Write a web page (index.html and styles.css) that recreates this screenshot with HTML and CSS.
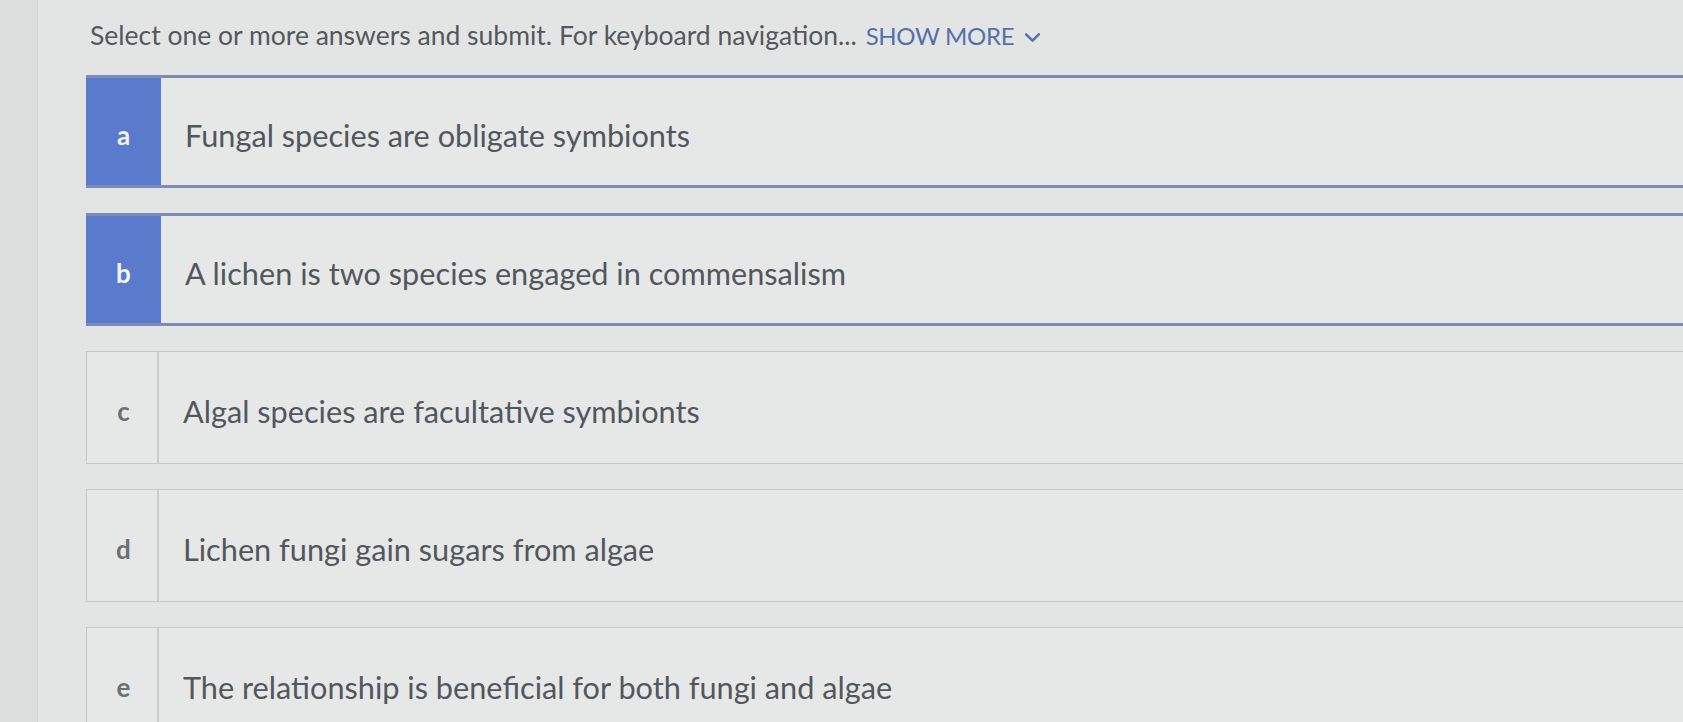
FILE: index.html
```html
<!DOCTYPE html>
<html>
<head>
<meta charset="utf-8">
<link rel="stylesheet" href="styles.css">
</head>
<body>
<div class="page">
  <div class="edge"></div>
  <main class="quiz">
    <p class="prompt">Select one or more answers and submit. For keyboard navigation... <span class="more">SHOW MORE <svg class="chev" viewBox="0 0 16 10" width="17" height="11"><path d="M2 2 L8 8 L14 2" fill="none" stroke="currentColor" stroke-width="2.4" stroke-linecap="round" stroke-linejoin="round"/></svg></span></p>
    <ul class="options">
      <li class="option selected"><span class="key">a</span><span class="text">Fungal species are obligate symbionts</span></li>
      <li class="option selected"><span class="key">b</span><span class="text">A lichen is two species engaged in commensalism</span></li>
      <li class="option"><span class="key">c</span><span class="text">Algal species are facultative symbionts</span></li>
      <li class="option"><span class="key">d</span><span class="text">Lichen fungi gain sugars from algae</span></li>
      <li class="option"><span class="key">e</span><span class="text">The relationship is beneficial for both fungi and algae</span></li>
    </ul>
  </main>
</div>
</body>
</html>
```

FILE: styles.css
```css
html, body {
  margin: 0;
  padding: 0;
  height: 100%;
  overflow: hidden;
  background: #e3e5e4;
}
.page {
  display: flex;
  height: 100%;
  font-family: Lato, "Open Sans", sans-serif;
  color: #52575d;
}
.edge {
  width: 37px;
  flex: none;
  background: #dcdedd;
  border-right: 1px solid #d2d4d3;
}
.quiz {
  flex: 1;
  padding-left: 48px;
  min-width: 0;
}
.prompt {
  margin: 0 0 0 4px;
  padding-top: 19px;
  height: 36px;
  font-size: 26.5px;
  line-height: 32px;
  color: #53585e;
  white-space: nowrap;
}
.more {
  color: #5570aa;
  font-size: 24px;
  letter-spacing: -0.3px;
  margin-left: 2px;
}
.chev {
  margin-left: 4px;
  vertical-align: 2px;
}
.options {
  list-style: none;
  margin: 20px -40px 0 0;
  padding: 0;
  display: flex;
  flex-direction: column;
  gap: 25px;
}
.option {
  display: flex;
  height: 113px;
  box-sizing: border-box;
  border: 1px solid #c6c9c8;
  border-right: none;
  background: #e6e8e7;
}
.key {
  width: 72px;
  flex: none;
  display: flex;
  align-items: center;
  justify-content: center;
  padding-top: 6px;
  padding-left: 3px;
  box-sizing: border-box;
  font-size: 26px;
  font-weight: 700;
  color: #6c7075;
  border-right: 2px solid #cbcdcc;
}
.text {
  display: flex;
  align-items: center;
  padding-left: 24px;
  padding-top: 8px;
  font-size: 30.7px;
  color: #52575d;
  white-space: nowrap;
}
.option.selected {
  border-top: 3px solid #7d8cb6;
  border-bottom: 3px solid #7d8cb6;
  border-left: none;
}
.option.selected .key {
  width: 75px;
  padding-left: 0;
  background: #5a7bcb;
  color: #f3f5fb;
  border-right: none;
}
```
